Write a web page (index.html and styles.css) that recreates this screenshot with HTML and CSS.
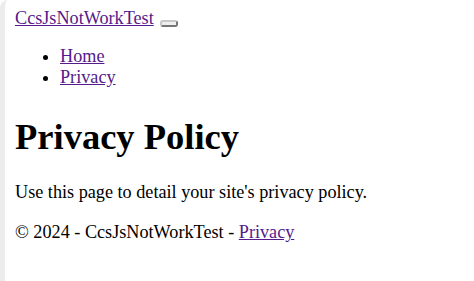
FILE: index.html
```html
<!DOCTYPE html>
<html lang="en">
<head>
    <meta charset="utf-8">
    <title>Privacy Policy - CcsJsNotWorkTest</title>
    <link rel="stylesheet" href="styles.css">
</head>
<body>
    <div class="frame">
        <header>
            <nav class="navbar">
                <div class="container">
                    <a class="navbar-brand" href="#">CcsJsNotWorkTest</a>
                    <button class="navbar-toggler" type="button"></button>
                    <div class="navbar-collapse">
                        <ul class="navbar-nav">
                            <li><a href="#">Home</a></li>
                            <li><a href="#">Privacy</a></li>
                        </ul>
                    </div>
                </div>
            </nav>
        </header>
        <main class="container">
            <h1>Privacy Policy</h1>
            <p>Use this page to detail your site's privacy policy.</p>
        </main>
        <footer class="container">
            &copy; 2024 - CcsJsNotWorkTest - <a href="#">Privacy</a>
        </footer>
    </div>
</body>
</html>
```

FILE: styles.css
```css
html, body {
    margin: 0;
    padding: 0;
    background-color: #fff;
}

body {
    font-family: "Liberation Serif", "Times New Roman", serif;
    font-size: 18.2px;
    line-height: 21px;
    color: #000;
}

.frame {
    min-height: 100vh;
    box-sizing: border-box;
    border-left: 5px solid #ececec;
    border-top-left-radius: 8px;
    padding: 8px 9px 8px 10px;
}

a {
    color: #551a8b;
}

.navbar-toggler {
    padding: 1px 6px;
    border: 2px outset #c8c8c8;
    border-radius: 3px;
    background-color: #efefef;
    width: 18px;
    height: 7px;
    vertical-align: baseline;
    margin-left: 2px;
}

.navbar-nav {
    margin: 17.4px 0 0;
    padding-left: 45px;
}

h1 {
    font-size: 36.5px;
    line-height: normal;
    margin: 26.6px 0 0;
}

p {
    margin: 24.4px 0 19px;
}
```
